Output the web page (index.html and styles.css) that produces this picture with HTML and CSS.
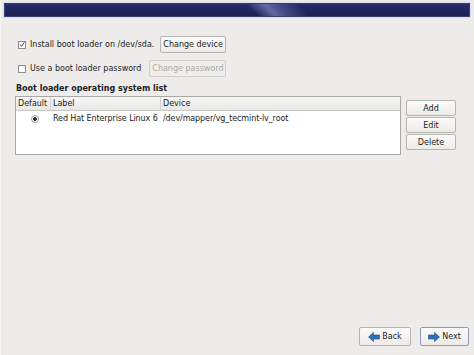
FILE: index.html
```html
<!DOCTYPE html>
<html>
<head>
<meta charset="utf-8">
<link rel="stylesheet" href="styles.css">
</head>
<body>
<div class="screen">
  <div class="banner"><div class="streak"></div></div>
  <div class="content">
    <div class="row row1">
      <label class="check"><span class="box checked">
        <svg width="7" height="7" viewBox="0 0 7 7"><path d="M1 3.5 L3 5.5 L6.2 1" fill="none" stroke="#333" stroke-width="1.1"/></svg>
      </span>Install boot loader on /dev/sda.</label>
      <button class="btn">Change device</button>
    </div>
    <div class="row row2">
      <label class="check"><span class="box"></span>Use a boot loader password</label>
      <button class="btn disabled">Change password</button>
    </div>
    <div class="section-title">Boot loader operating system list</div>
    <div class="list-area">
      <div class="table">
        <div class="thead">
          <div class="th c1">Default</div>
          <div class="th c2">Label</div>
          <div class="th c3">Device</div>
        </div>
        <div class="tr">
          <div class="td c1"><span class="radio"></span></div>
          <div class="td c2">Red Hat Enterprise Linux 6</div>
          <div class="td c3">/dev/mapper/vg_tecmint-lv_root</div>
        </div>
      </div>
      <div class="side">
        <button class="btn sbtn">Add</button>
        <button class="btn sbtn">Edit</button>
        <button class="btn sbtn">Delete</button>
      </div>
    </div>
  </div>
  <div class="footer">
    <button class="btn nav back"><svg width="12" height="10" viewBox="0 0 12 10"><path d="M0.5 5 L5.5 0.5 L5.5 3 L11.5 3 L11.5 7 L5.5 7 L5.5 9.5 Z" fill="#2f6fb8" stroke="#1d4f8c" stroke-width="0.6"/></svg>Back</button>
    <button class="btn nav next"><svg width="12" height="10" viewBox="0 0 12 10"><path d="M11.5 5 L6.5 0.5 L6.5 3 L0.5 3 L0.5 7 L6.5 7 L6.5 9.5 Z" fill="#2f6fb8" stroke="#1d4f8c" stroke-width="0.6"/></svg>Next</button>
  </div>
</div>
</body>
</html>
```
FILE: styles.css
```css
* { box-sizing: border-box; }
html, body { margin: 0; padding: 0; }
body {
  width: 474px; height: 355px; overflow: hidden;
  background: #edecea;
  font-family: "DejaVu Sans", sans-serif;
  font-size: 8px;
  color: #222;
}
.screen {
  width: 474px; height: 355px;
  display: flex; flex-direction: column;
  border-left: 1px solid #f6f5f3;
  position: relative;
}
.banner {
  margin: 3px 4px 0 3px;
  height: 14px;
  background: linear-gradient(180deg, #262c68 0%, #1c2152 100%);
  border: 1px solid #3a4078;
  position: relative;
  overflow: hidden;
  outline: 1px solid #d9dbe6;
}
.streak {
  position: absolute;
  left: 250px; top: -2px;
  width: 50px; height: 20px;
  background: linear-gradient(100deg, rgba(140,150,210,0) 0%, rgba(150,160,220,0.55) 35%, rgba(130,140,205,0.35) 60%, rgba(120,130,200,0) 100%);
  transform: skewX(50deg);
}
.content {
  padding: 19px 0 0 14px;
  display: flex; flex-direction: column;
}
.row { display: flex; align-items: center; height: 17px; }
.row1 { margin-bottom: 7px; }
.row2 { margin-bottom: 6px; }
.check { display: flex; align-items: center; white-space: nowrap; }
.box {
  width: 8px; height: 8px;
  border: 1px solid #8c8c8c;
  background: #fff;
  margin: 0 4px 0 3px;
  display: inline-flex; align-items: center; justify-content: center;
}
.row1 .check { margin-right: 6px; }
.row2 .check { margin-right: 8px; }
.btn {
  font-family: "DejaVu Sans", sans-serif;
  font-size: 8px;
  color: #222;
  background: linear-gradient(#fbfbfa, #ecebe8);
  border: 1px solid #b7b5b0;
  border-radius: 2px;
  height: 17px;
  padding: 0 2px;
  display: inline-flex; align-items: center; justify-content: center;
  white-space: nowrap;
}
.btn.disabled { color: #a9a9a6; border-color: #cfcdc9; background: #efeeec; }
.section-title { font-weight: bold; height: 11px; line-height: 11px; margin: 0 0 0 1px; }
.list-area { display: flex; align-items: flex-start; margin-top: 2px; }
.table {
  width: 386px; height: 59px;
  background: #fff;
  border: 1px solid #a9a8a4;
}
.thead {
  display: flex; height: 14px;
  background: linear-gradient(#f6f6f5, #e9e8e5);
  border-bottom: 1px solid #c9c8c4;
}
.th { display: flex; align-items: center; padding-left: 2px; border-right: 1px solid #d4d3cf; }
.th.c3 { border-right: none; }
.c1 { width: 35px; }
.c2 { width: 110px; }
.c3 { flex: 1; }
.tr { display: flex; height: 15px; align-items: center; }
.td { padding-left: 2px; white-space: nowrap; letter-spacing: -0.1px; }
.td.c1 { display: flex; justify-content: center; }
.radio {
  width: 8px; height: 8px; border-radius: 50%;
  border: 1px solid #9a9a9a;
  background: radial-gradient(circle, #333 0 1.6px, #fff 2px);
}
.side { display: flex; flex-direction: column; margin: 4px 0 0 5px; }
.sbtn { width: 50px; height: 16px; margin-bottom: 1px; }
.footer {
  margin-top: auto;
  display: flex; justify-content: flex-end;
  gap: 9px;
  padding: 0 5px 9px 0;
}
.nav { width: 52px; height: 19px; gap: 2px; }
.next { width: 49px; border-color: #8e98b4; }
```
